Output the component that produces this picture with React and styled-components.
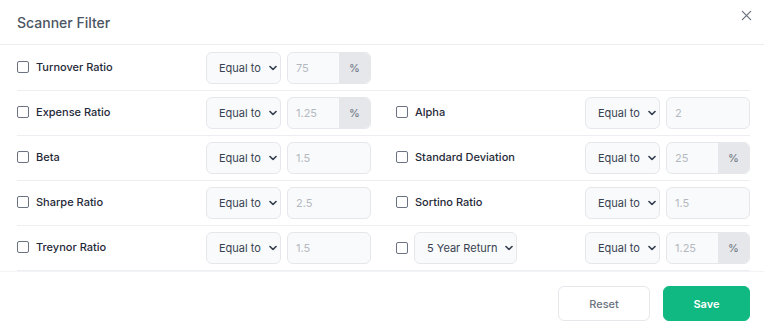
import React from "react";
import styled, { createGlobalStyle } from "styled-components";

const GlobalStyle = createGlobalStyle`
  body {
    margin: 0;
    background: #ffffff;
    font-family: Inter, "Noto Sans", sans-serif;
  }
`;

const Modal = styled.div`
  width: 764px;
  display: flex;
  flex-direction: column;
  background: #fff;
`;

const Header = styled.div`
  height: 44px;
  padding: 0 10px 0 17px;
  display: flex;
  align-items: center;
  justify-content: space-between;
  border-bottom: 1px solid #eceef1;
`;

const Title = styled.h2`
  margin: 0;
  font-size: 14px;
  font-weight: 500;
  color: #4b5563;
`;

const CloseButton = styled.button`
  border: none;
  background: none;
  padding: 0;
  margin-top: -14px;
  width: 16px;
  height: 16px;
  display: flex;
  align-items: center;
  justify-content: center;
  color: #6b7280;
  cursor: pointer;
`;

const Body = styled.div`
  padding: 1px 14px 0 17px;
`;

const Row = styled.div`
  display: grid;
  grid-template-columns: 1fr 1fr;
  column-gap: 25px;
  padding: 6px 0;
  border-bottom: 1px solid #eceef1;
`;

const Cell = styled.div`
  display: grid;
  grid-template-columns: 1fr 75px 84px;
  column-gap: 6px;
  align-items: center;
`;

const LabelWrap = styled.label`
  display: flex;
  align-items: center;
  gap: ${(p) => (p.$tight ? "6px" : "7px")};
  padding-bottom: ${(p) => (p.$tight ? "0" : "3px")};
  font-size: 11px;
  font-weight: 500;
  color: #1f2937;
`;

const Check = styled.input.attrs({ type: "checkbox" })`
  appearance: none;
  margin: 0;
  width: 12px;
  height: 12px;
  border: 1px solid #6b7280;
  border-radius: 2px;
  background: #fff;
  flex-shrink: 0;
`;

const SelectWrap = styled.div`
  position: relative;
  width: ${(p) => p.$width || "75px"};
  height: 32px;
`;

const Select = styled.select`
  appearance: none;
  width: 100%;
  height: 100%;
  box-sizing: border-box;
  padding: 0 18px 0 ${(p) => p.$pad || "12px"};
  border: 1px solid #e5e7eb;
  border-radius: 6px;
  background: #f9fafb;
  font-family: inherit;
  font-size: 11px;
  color: #374151;
  outline: none;
`;

const Chevron = styled.svg`
  position: absolute;
  right: 4px;
  top: 50%;
  transform: translateY(-50%);
  pointer-events: none;
`;

const InputGroup = styled.div`
  display: flex;
  height: 32px;
  box-sizing: border-box;
  border: 1px solid #e5e7eb;
  border-radius: 6px;
  overflow: hidden;
  background: #f9fafb;
`;

const Input = styled.input`
  flex: 1;
  min-width: 0;
  border: none;
  background: transparent;
  padding: 0 0 0 8px;
  font-family: inherit;
  font-size: 11px;
  color: #374151;
  outline: none;
  &::placeholder {
    color: #b4b9c1;
  }
`;

const Addon = styled.span`
  width: 31px;
  display: flex;
  align-items: center;
  justify-content: center;
  background: #e5e7eb;
  font-size: 11px;
  color: #6b7280;
`;

const Footer = styled.div`
  display: flex;
  justify-content: flex-end;
  gap: 13px;
  padding: 14px 14px 0 0;
  height: 50px;
  border-top: 1px solid #f3f4f6;
`;

const Button = styled.button`
  height: 35px;
  width: ${(p) => p.$width};
  border-radius: 6px;
  font-family: inherit;
  font-size: 11px;
  cursor: pointer;
  border: 1px solid ${(p) => (p.$primary ? "#10b981" : "#e5e7eb")};
  background: ${(p) => (p.$primary ? "#10b981" : "#fff")};
  color: ${(p) => (p.$primary ? "#fff" : "#6b7280")};
  font-weight: ${(p) => (p.$primary ? 600 : 500)};
`;

const ChevronIcon = () => (
  <Chevron width="8" height="5" viewBox="0 0 8 5" fill="none" stroke="#374151" strokeWidth="1.7" strokeLinecap="round" strokeLinejoin="round">
    <path d="M1 1l3 3 3-3" />
  </Chevron>
);

const OperatorSelect = ({ width, pad, options = ["Equal to", "Greater than", "Less than"] }) => (
  <SelectWrap $width={width}>
    <Select $pad={pad}>
      {options.map((o) => (
        <option key={o}>{o}</option>
      ))}
    </Select>
    <ChevronIcon />
  </SelectWrap>
);

const FilterCell = ({ label, value, percent, fieldSelect }) => (
  <Cell>
    <LabelWrap $tight={!!fieldSelect}>
      <Check />
      {fieldSelect ? (
        <OperatorSelect width="103px" pad="12px" options={[label, "3 Year Return", "1 Year Return"]} />
      ) : (
        label
      )}
    </LabelWrap>
    <OperatorSelect />
    <InputGroup>
      <Input placeholder={value} />
      {percent && <Addon>%</Addon>}
    </InputGroup>
  </Cell>
);

const rows = [
  [{ label: "Turnover Ratio", value: "75", percent: true }],
  [
    { label: "Expense Ratio", value: "1.25", percent: true },
    { label: "Alpha", value: "2" },
  ],
  [
    { label: "Beta", value: "1.5" },
    { label: "Standard Deviation", value: "25", percent: true },
  ],
  [
    { label: "Sharpe Ratio", value: "2.5" },
    { label: "Sortino Ratio", value: "1.5" },
  ],
  [
    { label: "Treynor Ratio", value: "1.5" },
    { label: "5 Year Return", value: "1.25", percent: true, fieldSelect: true },
  ],
];

const App = () => {
  return (
    <>
      <GlobalStyle />
      <Modal>
        <Header>
          <Title>Scanner Filter</Title>
          <CloseButton aria-label="Close">
            <svg width="11" height="11" viewBox="0 0 12 12" fill="none" stroke="currentColor" strokeWidth="1.4" strokeLinecap="round">
              <path d="M1.5 1.5l9 9M10.5 1.5l-9 9" />
            </svg>
          </CloseButton>
        </Header>
        <Body>
          {rows.map((row, i) => (
            <Row key={i}>
              {row.map((f) => (
                <FilterCell key={f.label} {...f} />
              ))}
            </Row>
          ))}
        </Body>
        <Footer>
          <Button $width="92px">Reset</Button>
          <Button $width="87px" $primary>Save</Button>
        </Footer>
      </Modal>
    </>
  );
};

export default App;
